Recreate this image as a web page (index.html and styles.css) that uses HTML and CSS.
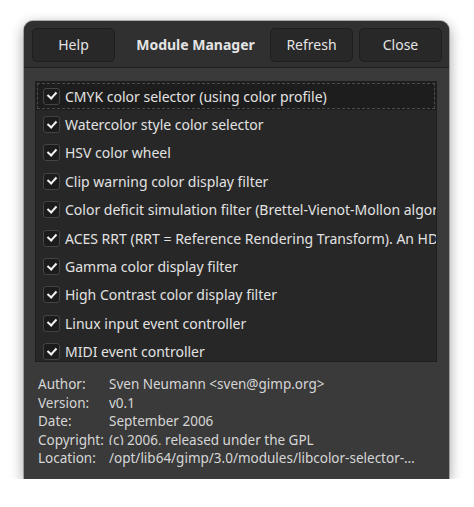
FILE: index.html
```html
<!DOCTYPE html>
<html>
<head>
<meta charset="utf-8">
<link rel="stylesheet" href="styles.css">
</head>
<body>
<div class="window">
  <div class="header">
    <button class="btn">Help</button>
    <div class="title">Module Manager</div>
    <button class="btn">Refresh</button>
    <button class="btn">Close</button>
  </div>
  <div class="content">
    <div class="list">
      <div class="row selected"><span class="check"></span><span class="label">CMYK color selector (using color profile)</span></div>
      <div class="row"><span class="check"></span><span class="label">Watercolor style color selector</span></div>
      <div class="row"><span class="check"></span><span class="label">HSV color wheel</span></div>
      <div class="row"><span class="check"></span><span class="label">Clip warning color display filter</span></div>
      <div class="row"><span class="check"></span><span class="label">Color deficit simulation filter (Brettel-Vienot-Mollon algorithm)</span></div>
      <div class="row"><span class="check"></span><span class="label">ACES RRT (RRT = Reference Rendering Transform). An HDR to SDR proxy filter</span></div>
      <div class="row"><span class="check"></span><span class="label">Gamma color display filter</span></div>
      <div class="row"><span class="check"></span><span class="label">High Contrast color display filter</span></div>
      <div class="row"><span class="check"></span><span class="label">Linux input event controller</span></div>
      <div class="row"><span class="check"></span><span class="label">MIDI event controller</span></div>
    </div>
    <div class="info">
      <div class="k">Author:</div><div class="v">Sven Neumann &lt;sven@gimp.org&gt;</div>
      <div class="k">Version:</div><div class="v">v0.1</div>
      <div class="k">Date:</div><div class="v">September 2006</div>
      <div class="k">Copyright:</div><div class="v clip"><span>(c) 2006, released under the GPL</span></div>
      <div class="k">Location:</div><div class="v ell">/opt/lib64/gimp/3.0/modules/libcolor-selector-cmyk.so</div>
    </div>
  </div>
</div>
</body>
</html>
```

FILE: styles.css
```css
html, body {
  margin: 0;
  padding: 0;
  background: #ffffff;
}
body {
  font-family: "Noto Sans", "Open Sans", sans-serif;
  color: #e2e2e2;
}
.window {
  margin: 21px 0 0 24px;
  width: 425px;
  height: 458px;
  background: #3a3a3a;
  border-radius: 9px 9px 0 0;
  box-shadow: 0 4px 14px rgba(0,0,0,0.4), 0 0 0 1px rgba(0,0,0,0.25);
  overflow: hidden;
  display: flex;
  flex-direction: column;
}
.header {
  height: 46px;
  background: #303030;
  border-bottom: 1px solid #1f1f1f;
  display: flex;
  align-items: center;
  padding: 0 7px 0 8px;
  gap: 6px;
}
.btn {
  width: 83px;
  height: 34px;
  background: #282828;
  border: 1px solid #1e1e1e;
  border-radius: 5px;
  color: #e4e4e4;
  font-family: "Noto Sans", "Open Sans", sans-serif;
  font-size: 14px;
  padding: 0;
  margin-top: 1px;
}
.title {
  flex: 1;
  text-align: center;
  font-weight: bold;
  font-size: 14px;
  color: #e4e4e4;
  padding-left: 6px;
}
.content {
  padding: 13px 12px 0 11px;
  display: flex;
  flex-direction: column;
}
.list {
  height: 279px;
  background: #272727;
  border: 1px solid #1e1e1e;
  overflow: hidden;
}
.row {
  height: 28.4px;
  display: flex;
  align-items: center;
  padding-left: 7px;
  white-space: nowrap;
  font-size: 14px;
  box-sizing: border-box;
}
.row.selected {
  background: #1d1d1d;
  outline: 1px dashed #4a4a4a;
  outline-offset: -2px;
}
.check {
  flex: none;
  width: 17px;
  height: 17px;
  box-sizing: border-box;
  border: 1px solid #444444;
  background: #1c1c1c;
  border-radius: 3px;
  margin-right: 5px;
  position: relative;
}
.check::after {
  content: "";
  position: absolute;
  left: 4.5px;
  top: 1.5px;
  width: 4px;
  height: 7px;
  border: solid #f4f4f4;
  border-width: 0 2.5px 2.5px 0;
  transform: rotate(42deg);
}
.label {
  color: #e2e2e2;
}
.info {
  margin-top: 13px;
  padding-left: 3px;
  display: grid;
  grid-template-columns: 71px 1fr;
  font-size: 13.5px;
  line-height: 18.5px;
  color: #d6d6d6;
}
.v {
  white-space: nowrap;
  overflow: hidden;
}
.clip {
  height: 14px;
  margin-bottom: 4.5px;
  overflow: hidden;
}
.v.ell {
  text-overflow: ellipsis;
  width: 306px;
}
```
